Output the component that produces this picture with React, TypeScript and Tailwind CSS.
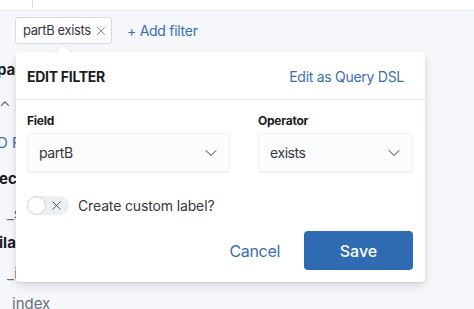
import { ChevronDown, X } from "lucide-react";

const SIDEBAR = [
  { h: "h-[36px]", text: "par", cls: "font-bold text-[#1a1c21] ml-[-3px]" },
  { h: "h-[39px]", text: "⌃ S", cls: "text-[#69707d] ml-[-1px]" },
  { h: "h-[33px]", text: "D F", cls: "text-[#3b6db3] ml-[-3px]" },
  { h: "h-[39px]", text: "ect", cls: "font-bold text-[#1a1c21] ml-[-1px]" },
  { h: "h-[31px]", text: "_s", cls: "text-[#69707d] ml-[7px]" },
  { h: "h-[27px]", text: "ila", cls: "font-bold text-[#1a1c21] ml-[-1px]" },
  { h: "h-[35px]", text: "_i", cls: "text-[#69707d] ml-[7px]" },
  { h: "h-[24px]", text: "index", cls: "text-[#69707d] ml-[12px]" },
];

function Select({ value }: { value: string }) {
  return (
    <div className="h-[39px] flex items-center justify-between pl-[11px] pr-[8px] bg-[#fbfcfd] border border-[#eef0f4] rounded-[3px] shadow-[0_1px_1px_rgba(0,0,0,0.06)]">
      <span className="text-[14px] tracking-[-0.03em] text-[#343741]">{value}</span>
      <ChevronDown className="w-[20px] h-[20px] text-[#343741]" strokeWidth={1.2} />
    </div>
  );
}

export default function App() {
  return (
    <div className="relative w-[474px] h-[309px] overflow-hidden bg-[#f5f7fa] font-['Inter',sans-serif]">
      {/* top bar */}
      <div className="h-[11px] bg-white border-b border-[#e6e9ee]">
        <div className="ml-[32px] w-px h-[8px] bg-[#d3dae6]" />
      </div>

      {/* filter bar */}
      <div className="flex items-center gap-[15px] pl-[15px] mt-[6px]">
        <div className="h-[27px] w-[97px] flex items-center pl-[7px] bg-white border border-[#d3dae6] rounded-[3px] text-[13px] tracking-[-0.03em] text-[#343741]">
          <span>partB exists</span>
          <X className="w-[14px] h-[14px] ml-[3px] text-[#69707d]" strokeWidth={1.4} />
        </div>
        <span className="text-[14px] tracking-[-0.02em] text-[#3b6db3]">+ Add filter</span>
      </div>

      {/* sidebar behind popover */}
      <div className="flex flex-col mt-[8px] text-[15px]">
        {SIDEBAR.map((r, i) => (
          <div key={i} className={`${r.h} flex items-center whitespace-nowrap`}>
            <span className={r.cls}>{r.text}</span>
          </div>
        ))}
      </div>

      {/* popover */}
      <div className="absolute left-[16px] top-[52px] w-[409px] h-[230px] bg-white rounded-[4px] shadow-[0_4px_10px_rgba(0,0,0,0.12),0_1px_2px_rgba(0,0,0,0.08)]">
        <div className="absolute left-[41px] top-[-6px] w-[12px] h-[12px] rotate-45 bg-white border-l border-t border-[#e4e8ee]" />
        <div className="relative h-[48px] flex items-center justify-between pl-[11px] pr-[21px] pt-[2px] border-b border-[#e9edf3]">
          <span className="text-[14px] font-bold tracking-[-0.02em] text-[#1a1c21]">EDIT FILTER</span>
          <span className="text-[14px] tracking-[-0.02em] text-[#3b6db3]">Edit as Query DSL</span>
        </div>
        <div className="pl-[11px] pr-[12px] pt-[12px]">
          <div className="grid grid-cols-[203px_155px] gap-x-[28px]">
            <div className="flex flex-col gap-[3px]">
              <span className="text-[12px] leading-[18px] font-bold tracking-[-0.02em] text-[#1a1c21]">Field</span>
              <Select value="partB" />
            </div>
            <div className="flex flex-col gap-[3px]">
              <span className="text-[12px] leading-[18px] font-bold tracking-[-0.02em] text-[#1a1c21]">Operator</span>
              <Select value="exists" />
            </div>
          </div>
          <div className="flex items-center gap-[9px] mt-[23px]">
            <div className="w-[42px] h-[19px] flex items-center rounded-full bg-[#eceff3]">
              <div className="w-[19px] h-[19px] rounded-full bg-white border border-[#cfd5de]" />
              <X className="w-[15px] h-[15px] ml-[3px] text-[#343741]" strokeWidth={1.3} />
            </div>
            <span className="text-[14px] tracking-[-0.01em] text-[#343741]">Create custom label?</span>
          </div>
          <div className="flex items-center justify-end gap-[24px] mt-[15px]">
            <span className="text-[16px] tracking-[-0.02em] text-[#3b6db3]">Cancel</span>
            <div className="w-[109px] h-[39px] flex items-center justify-center rounded-[4px] bg-[#2e6bb3] text-[16px] font-medium text-white">
              Save
            </div>
          </div>
        </div>
      </div>
    </div>
  );
}
